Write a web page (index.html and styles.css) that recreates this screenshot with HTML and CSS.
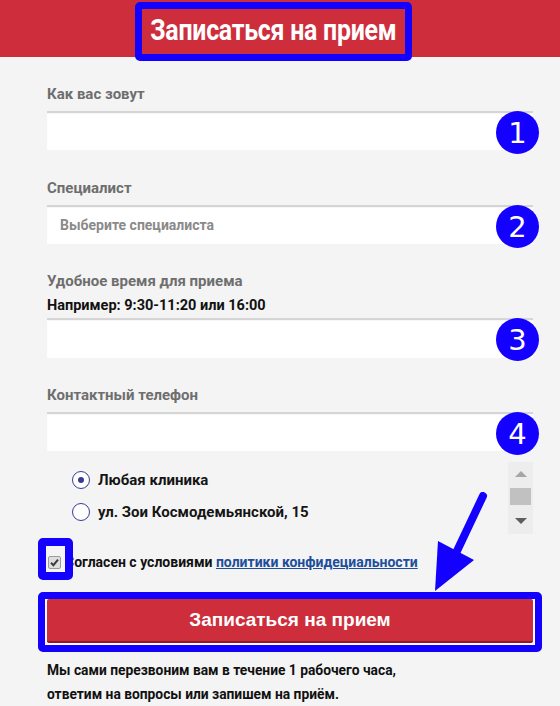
FILE: index.html
```html
<!DOCTYPE html>
<html lang="ru">
<head>
<meta charset="utf-8">
<title>Записаться на прием</title>
<link rel="stylesheet" href="styles.css">
</head>
<body>
<div class="page">
  <header class="header">
    <h1 class="title"><span class="title-text">Записаться на прием</span></h1>
  </header>
  <form class="form">
    <div class="field field-1">
      <div class="label">Как вас зовут</div>
      <div class="input-wrap">
        <div class="input"></div>
        <span class="badge">1</span>
      </div>
    </div>
    <div class="field field-2">
      <div class="label">Специалист</div>
      <div class="input-wrap">
        <div class="input select"><span class="placeholder">Выберите специалиста</span></div>
        <span class="badge">2</span>
      </div>
    </div>
    <div class="field field-3">
      <div class="label">Удобное время для приема</div>
      <div class="hint">Например: 9:30-11:20 или 16:00</div>
      <div class="input-wrap">
        <div class="input"></div>
        <span class="badge">3</span>
      </div>
    </div>
    <div class="field field-4">
      <div class="label">Контактный телефон</div>
      <div class="input-wrap">
        <div class="input"></div>
        <span class="badge">4</span>
      </div>
    </div>
    <div class="clinics">
      <div class="options">
        <div class="option"><span class="radio checked"></span><span class="option-text">Любая клиника</span></div>
        <div class="option"><span class="radio"></span><span class="option-text">ул. Зои Космодемьянской, 15</span></div>
      </div>
      <div class="scrollbar">
        <span class="arrow-up"></span>
        <span class="thumb"></span>
        <span class="arrow-down"></span>
      </div>
    </div>
    <div class="agree">
      <span class="checkbox"><svg viewBox="0 0 13 13" width="13" height="13"><path d="M3 6.8 L5.4 9.2 L10 3.6" fill="none" stroke="#3c3c3c" stroke-width="2"/></svg></span>
      <span class="agree-text">Согласен с условиями <a class="link" href="#">политики конфидециальности</a></span>
      <span class="check-frame"></span>
    </div>
    <div class="button-frame">
      <button class="submit" type="button">Записаться на прием</button>
    </div>
    <p class="note">Мы сами перезвоним вам в течение 1 рабочего часа,<br>ответим на вопросы или запишем на приём.</p>
  </form>
  <svg class="pointer" width="80" height="110" viewBox="0 0 80 110">
    <path d="M49 4 L14 78" stroke="#1400ff" stroke-width="8" stroke-linecap="round" fill="none"/>
    <polygon points="4,49 40,68 1,99" fill="#1400ff"/>
  </svg>
</div>
</body>
</html>
```
FILE: styles.css
```css
* { box-sizing: border-box; }
html, body { margin: 0; padding: 0; }
body {
  background: #f4f4f4;
  font-family: Roboto, "Noto Sans", sans-serif;
  width: 560px;
  height: 706px;
  overflow: hidden;
}
.page { position: relative; width: 560px; height: 706px; }

.header {
  height: 57px;
  background: #ce2d3b;
  display: flex;
  justify-content: center;
  align-items: flex-start;
  padding-right: 13px;
}
.title {
  margin: 2px 0 0;
  height: 59px;
  width: 277px;
  border: 7px solid #1400ff;
  border-radius: 5px;
  background: #ce2d3b;
  color: #fff;
  font-family: Roboto, sans-serif;
  font-size: 30px;
  font-weight: 700;
  line-height: 41px;
  white-space: nowrap;
  display: flex;
  justify-content: center;
  position: relative;
  z-index: 1;
}
.title-text {
  display: inline-block;
  transform: scaleX(0.83);
  transform-origin: center;
  letter-spacing: -0.3px;
}

.form {
  margin: 0;
  padding: 0 27px 0 47px;
}
.field { display: flex; flex-direction: column; }
.field-1 { padding-top: 28px; }
.field-2 { padding-top: 29px; }
.field-3 { padding-top: 28px; }
.field-4 { padding-top: 28px; }

.label {
  color: #6e6e6e;
  font-size: 15px;
  font-weight: 700;
  line-height: 18px;
  margin-bottom: 8px;
}
.hint {
  color: #111;
  font-size: 14.5px;
  font-weight: 700;
  line-height: 18px;
  margin-top: -1px;
  margin-bottom: 3px;
}
.input-wrap { position: relative; }
.input {
  height: 39px;
  background: #fff;
  border-top: 2px solid #d5d5d5;
  box-shadow: inset 0 1px 1px rgba(0,0,0,0.04);
}
.field-3 .input { height: 40px; }
.select { display: flex; align-items: center; padding-left: 13px; padding-bottom: 2px; }
.placeholder {
  color: #8a8a8a;
  font-size: 14px;
  font-weight: 700;
}
.badge {
  position: absolute;
  left: 449px;
  top: 0;
  width: 43px;
  height: 43px;
  border-radius: 50%;
  background: #1400ff;
  color: #fff;
  font-family: "DejaVu Sans", sans-serif;
  font-size: 29px;
  line-height: 45px;
  text-align: center;
}

.clinics {
  display: flex;
  justify-content: space-between;
  margin-top: 11px;
  height: 72px;
}
.options {
  padding-left: 25px;
  padding-top: 8px;
  display: flex;
  flex-direction: column;
  gap: 12px;
}
.option { display: flex; align-items: center; gap: 8px; height: 20px; }
.radio {
  width: 18px;
  height: 18px;
  border-radius: 50%;
  border: 1.5px solid #3a3a96;
  background: #fff;
  display: flex;
  align-items: center;
  justify-content: center;
}
.radio.checked::after {
  content: "";
  width: 6px;
  height: 6px;
  border-radius: 50%;
  background: #3a3a96;
}
.option-text {
  color: #151515;
  font-size: 15px;
  font-weight: 700;
}
.scrollbar {
  width: 25px;
  height: 72px;
  background: #ededed;
  display: flex;
  flex-direction: column;
  align-items: center;
  padding-top: 9px;
}
.arrow-up {
  width: 0; height: 0;
  border-left: 6px solid transparent;
  border-right: 6px solid transparent;
  border-bottom: 6px solid #a6a6a6;
}
.thumb {
  margin-top: 11px;
  width: 21px;
  height: 17px;
  background: #c1c1c1;
}
.arrow-down {
  margin-top: 13px;
  width: 0; height: 0;
  border-left: 6px solid transparent;
  border-right: 6px solid transparent;
  border-top: 6px solid #5e5e5e;
}

.agree {
  position: relative;
  display: flex;
  align-items: center;
  height: 20px;
  margin-top: 18px;
  margin-left: 1px;
  gap: 4px;
}
.checkbox {
  width: 13px;
  height: 13px;
  border: 1px solid #9c9c9c;
  border-radius: 2px;
  background: #dedede;
  display: flex;
}
.checkbox svg { display: block; margin: -1px; }
.agree-text {
  color: #111;
  font-size: 14px;
  font-weight: 700;
}
.link { color: #1d4f9a; text-decoration: underline; }
.check-frame {
  position: absolute;
  left: -10px;
  top: -14px;
  width: 35px;
  height: 42px;
  border: 8px solid #1400ff;
  border-radius: 5px;
}

.button-frame {
  margin: 20px 0 0 -9px;
  width: 504px;
  height: 60px;
  border: 7px solid #1400ff;
  border-radius: 5px;
  background: #fafafa;
  padding: 0 2px 0 2px;
}
.submit {
  display: block;
  width: 100%;
  height: 44px;
  border: 0;
  border-bottom: 2px solid #8c1d27;
  border-radius: 2px;
  background: #ce2d3b;
  color: #fff;
  font-family: "Liberation Sans", Arial, sans-serif;
  font-size: 19px;
  font-weight: 700;
  padding: 0;
}
.note {
  margin: 6px 0 0;
  color: #111;
  font-size: 13.8px;
  font-weight: 700;
  line-height: 24px;
}

.pointer {
  position: absolute;
  left: 434px;
  top: 492px;
}
```
